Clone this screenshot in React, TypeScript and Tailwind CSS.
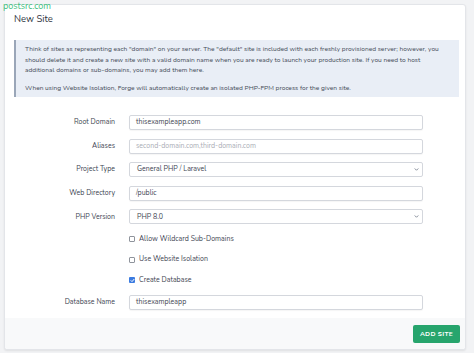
import React from "react";

const font = { fontFamily: '"Nunito", "Lato", "Open Sans", sans-serif' };

function Chevron() {
  return (
    <svg viewBox="0 0 10 10" className="w-[5px] h-[5px] text-gray-500" fill="none" stroke="currentColor" strokeWidth={1.6}>
      <path d="M2 3.5l3 3 3-3" strokeLinecap="round" strokeLinejoin="round" />
    </svg>
  );
}

function Row({ label, children }: { label: string; children: React.ReactNode }) {
  return (
    <div className="flex items-center h-[15px]">
      <div className="w-[110px] text-right text-[7px] text-[#3d4451]">{label}</div>
      <div className="ml-[14px] w-[294px] h-full">{children}</div>
    </div>
  );
}

function Input({ value, placeholder }: { value?: string; placeholder?: string }) {
  return (
    <div className="h-full border border-[#d4d7dd] rounded-[2px] bg-white flex items-center pl-[6px] text-[7px] shadow-[0_1px_1px_rgba(0,0,0,0.04)]">
      {value ? <span className="text-[#3d4451]">{value}</span> : <span className="text-[#a9adb5]">{placeholder}</span>}
    </div>
  );
}

function Select({ value }: { value: string }) {
  return (
    <div className="h-full border border-[#d4d7dd] rounded-[2px] bg-white flex items-center justify-between pl-[7px] pr-[3px] text-[7px] text-[#3d4451]">
      <span>{value}</span>
      <Chevron />
    </div>
  );
}

function Check({ label, checked }: { label: string; checked?: boolean }) {
  return (
    <div className="flex items-center h-[12px]">
      <div className="w-[124px]" />
      {checked ? (
        <span className="w-[6px] h-[6px] rounded-[1px] bg-[#3b7be0] flex items-center justify-center">
          <svg viewBox="0 0 10 10" className="w-[5px] h-[5px]" fill="none" stroke="white" strokeWidth={2}>
            <path d="M2 5.2l2 2 4-4.5" strokeLinecap="round" strokeLinejoin="round" />
          </svg>
        </span>
      ) : (
        <span className="w-[6px] h-[6px] rounded-[1px] border border-[#8f949c] bg-white" />
      )}
      <span className="ml-[4px] text-[7px] text-[#3d4451]">{label}</span>
    </div>
  );
}

export default function App() {
  return (
    <div className="relative w-[474px] h-[353px] bg-[#f2f3f5] overflow-hidden pl-[4px] pt-[4px]" style={font}>
      <div className="absolute top-[1px] left-[3px] text-[9px] leading-[10px] text-[#3fbf7f] z-10">postsrc.com</div>

      <div className="w-[462px] h-[346px] bg-white rounded-[3px] border border-[#e3e5e9] shadow-[0_1px_2px_rgba(0,0,0,0.08)] flex flex-col">
        {/* header */}
        <div className="pl-[9px] pt-[7px] h-[35px] text-[9.5px] text-[#2f3540]">New Site</div>

        {/* info */}
        <div className="ml-[9px] mr-[6px] border-l-[2px] border-[#9aa6b8] bg-[#e9eef6] pl-[9px] pr-[6px] py-[4px] text-[6.6px] leading-[10.5px] text-[#454c58] whitespace-nowrap">
          <p>
            Think of sites as representing each "domain" on your server. The "default" site is included with each freshly provisioned server; however, you
            <br />
            should delete it and create a new site with a valid domain name when you are ready to launch your production site. If you need to host
            <br />
            additional domains or sub-domains, you may add them here.
          </p>
          <p className="mt-[7px]">When using Website Isolation, Forge will automatically create an isolated PHP-FPM process for the given site.</p>
        </div>

        {/* form */}
        <div className="flex flex-col gap-[8.6px] mt-[18px]">
          <Row label="Root Domain"><Input value="thisexampleapp.com" /></Row>
          <Row label="Aliases"><Input placeholder="second-domain.com,third-domain.com" /></Row>
          <Row label="Project Type"><Select value="General PHP / Laravel" /></Row>
          <Row label="Web Directory"><Input value="/public" /></Row>
          <Row label="PHP Version"><Select value="PHP 8.0" /></Row>
          <Check label="Allow Wildcard Sub-Domains" />
          <Check label="Use Website Isolation" />
          <Check label="Create Database" checked />
          <Row label="Database Name"><Input value="thisexampleapp" /></Row>
        </div>

        {/* footer */}
        <div className="mt-auto h-[31px] bg-[#f8f9fa] rounded-b-[3px] flex items-center justify-end pr-[5px]">
          <button className="h-[18px] w-[47px] rounded-[2px] bg-[#27a56d] text-white text-[6.6px] font-bold tracking-[0.3px] uppercase">
            Add Site
          </button>
        </div>
      </div>
    </div>
  );
}
